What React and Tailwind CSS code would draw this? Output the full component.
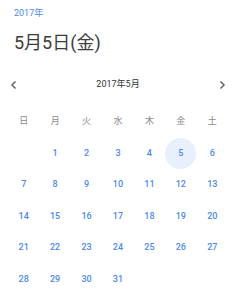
import React from 'react';

const weekdays = ['日', '月', '火', '水', '木', '金', '土'];

const App = () => {
  const cells = [null, ...Array.from({ length: 31 }, (_, i) => i + 1)];
  return (
    <div className="w-[236px] h-[300px] bg-white overflow-hidden" style={{ fontFamily: 'Roboto, "Noto Sans CJK JP", sans-serif' }}>
      <div className="px-[14px] pt-[7px]">
        <div className="text-[9px] leading-[12px] text-[#4a8af4]">2017年</div>
        <div className="mt-[12px] text-[18px] leading-[24px] text-[#3c3c3c]">5月5日(金)</div>
      </div>
      <div className="mt-[20px] h-[20px] flex items-center justify-between px-[10px]">
        <svg width="8" height="10" viewBox="0 0 8 10"><path d="M5.5 1.5 L2 5 L5.5 8.5" fill="none" stroke="#666" strokeWidth="1.5" /></svg>
        <div className="text-[9px] text-[#333]">2017年5月</div>
        <svg width="8" height="10" viewBox="0 0 8 10"><path d="M2.5 1.5 L6 5 L2.5 8.5" fill="none" stroke="#666" strokeWidth="1.5" /></svg>
      </div>
      <div className="mt-[11px] px-[8px] grid grid-cols-7">
        {weekdays.map(w => (
          <div key={w} className="h-[31.5px] flex items-center justify-center text-[9px] text-[#8a8a8a]">{w}</div>
        ))}
        {cells.map((d, i) => (
          <div key={i} className="h-[31.5px] flex items-center justify-center">
            {d && (
              <div className={`w-[31px] h-[31px] rounded-full flex items-center justify-center text-[9px] font-medium text-[#4a8af4] ${d === 5 ? 'bg-[#e8f0fe]' : ''}`}>{d}</div>
            )}
          </div>
        ))}
      </div>
    </div>
  );
};

export default App;
